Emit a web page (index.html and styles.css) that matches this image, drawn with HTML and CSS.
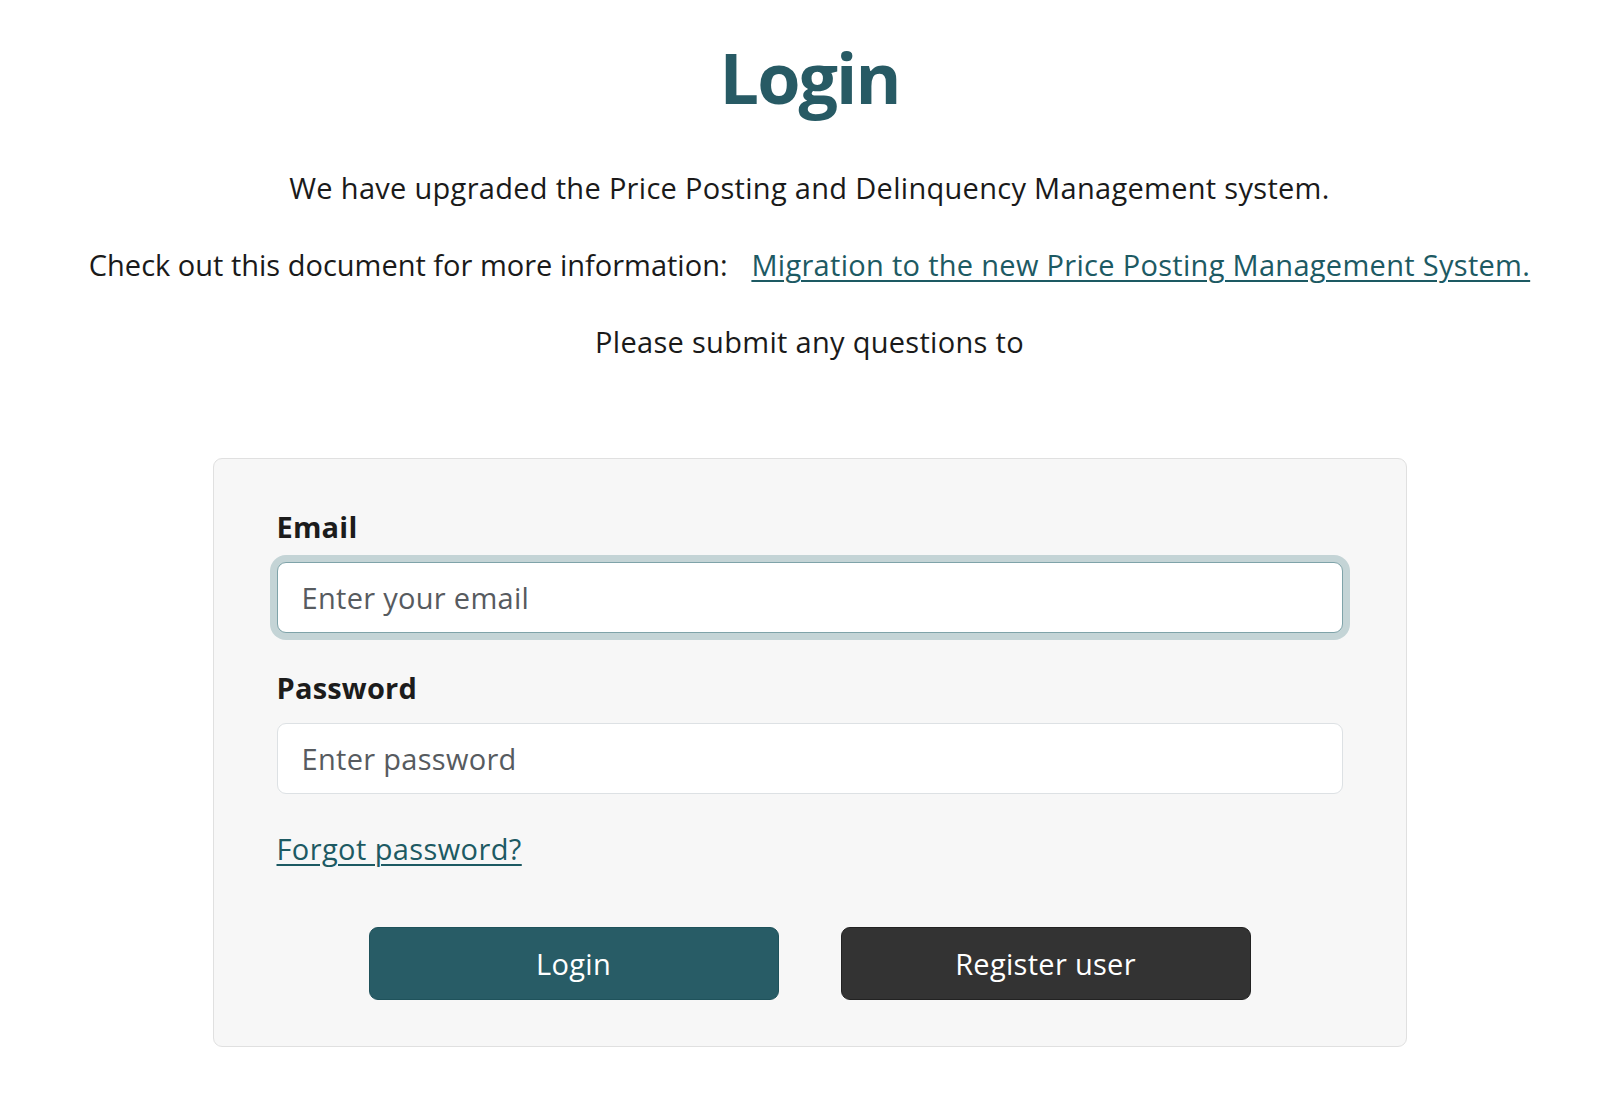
FILE: index.html
```html
<!DOCTYPE html>
<html lang="en">
<head>
<meta charset="utf-8">
<title>Login</title>
<link rel="stylesheet" href="styles.css">
</head>
<body>
<main class="page">
  <h1 class="title">Login</h1>
  <div class="notices">
    <p class="notice">We have upgraded the Price Posting and Delinquency Management system.</p>
    <p class="notice"><span class="notice-lead">Check out this document for more information:</span> <a class="doc-link" href="#">Migration to the new Price Posting Management System.</a></p>
    <p class="notice">Please submit any questions to</p>
  </div>
  <form class="card">
    <label class="field-label" for="email">Email</label>
    <input class="field field-focus" id="email" type="text" placeholder="Enter your email">
    <label class="field-label" for="password">Password</label>
    <input class="field" id="password" type="password" placeholder="Enter password">
    <a class="forgot" href="#">Forgot password?</a>
    <div class="actions">
      <button class="btn btn-primary" type="button">Login</button>
      <button class="btn btn-dark" type="button">Register user</button>
    </div>
  </form>
</main>
</body>
</html>
```

FILE: styles.css
```css
* { box-sizing: border-box; }

body {
  margin: 0;
  background: #ffffff;
  color: #1a1a1a;
  font-family: "Open Sans", "Noto Sans", sans-serif;
}

.page {
  padding-left: 19px;
  display: flex;
  flex-direction: column;
  align-items: center;
}

.title {
  margin: 33px 0 0;
  font-size: 70px;
  line-height: 88px;
  font-weight: 700;
  letter-spacing: -2px;
  color: #275a64;
}

.notices {
  margin-top: 49px;
  display: flex;
  flex-direction: column;
  align-items: center;
  gap: 41px;
}

.notice {
  margin: 0;
  font-size: 29px;
  line-height: 36px;
  letter-spacing: 0.3px;
  color: #1a1a1a;
  text-align: center;
}

.notice-lead {
  letter-spacing: 0;
}

.doc-link {
  margin-left: 16px;
  color: #1d5a63;
  text-decoration: underline;
  text-underline-offset: 4px;
  text-decoration-thickness: 2px;
}

.card {
  margin-top: 98px;
  width: 1194px;
  padding: 50px 63px 46px;
  background: #f7f7f7;
  border: 1px solid #e0e0e0;
  border-radius: 9px;
  display: flex;
  flex-direction: column;
}

.field-label {
  font-size: 29px;
  line-height: 36px;
  font-weight: 700;
  letter-spacing: 0.2px;
  color: #1c1c1c;
  margin-bottom: 17px;
}

.field {
  width: 100%;
  height: 71px;
  margin-bottom: 37px;
  padding: 0 24px;
  font-family: inherit;
  font-size: 29px;
  letter-spacing: 0.3px;
  color: #1a1a1a;
  background: #ffffff;
  border: 1px solid #dde1e4;
  border-radius: 9px;
  outline: none;
}

.field::placeholder {
  color: #575b5f;
  opacity: 1;
}

.field-focus {
  border-color: #7fa3a9;
  box-shadow: 0 0 0 7px #c4d4d6;
}

.forgot {
  align-self: flex-start;
  font-size: 29px;
  line-height: 36px;
  letter-spacing: 0.4px;
  color: #1d5a63;
  text-decoration: underline;
  text-underline-offset: 4px;
  text-decoration-thickness: 2px;
}

.actions {
  margin-top: 60px;
  display: flex;
  justify-content: center;
  gap: 62px;
}

.btn {
  width: 410px;
  height: 73px;
  font-family: inherit;
  font-size: 29px;
  letter-spacing: 0.3px;
  color: #ffffff;
  border-radius: 9px;
  cursor: pointer;
}

.btn-primary {
  background: #285c66;
  border: 1px solid #1f525b;
}

.btn-dark {
  background: #333333;
  border: 1px solid #222222;
}
```
